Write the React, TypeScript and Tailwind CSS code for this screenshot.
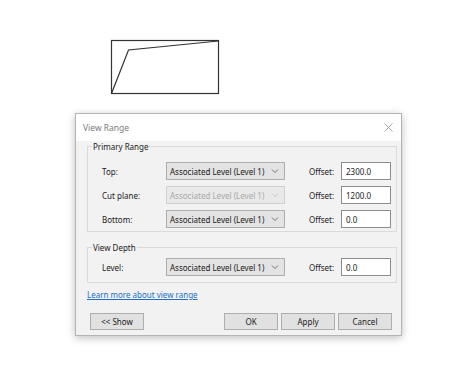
// App.tsx — "View Range" dialog
function Chevron({ disabled = false }: { disabled?: boolean }) {
  return (
    <svg className="h-[6px] w-[8px]" viewBox="0 0 8 6" fill="none" aria-hidden="true">
      <path d="M1 1.5l3 3 3-3" stroke={disabled ? '#c8c8c8' : '#777'} strokeWidth="1" />
    </svg>
  );
}

function LevelSelect({ disabled = false }: { disabled?: boolean }) {
  return (
    <div
      className={
        disabled
          ? 'flex h-[18px] w-[119px] items-center justify-between border border-[#cfcfcf] bg-[#e9e9e9] pl-[3px] pr-[5px] text-[#a8a8a8]'
          : 'flex h-[18px] w-[119px] items-center justify-between border border-[#adadad] bg-[#e3e3e3] pl-[3px] pr-[5px] text-[#1a1a1a]'
      }
    >
      <span>Associated Level (Level 1)</span>
      <Chevron disabled={disabled} />
    </div>
  );
}

function Row({ label, value, disabled = false }: { label: string; value: string; disabled?: boolean }) {
  return (
    <div className="flex h-[18px] items-center">
      <span className="w-[78px] shrink-0 pl-[14px]">{label}</span>
      <LevelSelect disabled={disabled} />
      <span className="ml-[24px] w-[32px] shrink-0">Offset:</span>
      <div className="flex h-[18px] w-[50px] shrink-0 items-center border border-[#8c8c8c] bg-white pl-[4px]">{value}</div>
    </div>
  );
}

function Btn({ children, className = '' }: { children: string; className?: string }) {
  return (
    <button
      className={
        'flex h-[17px] w-[54px] items-center justify-center border border-[#adadad] bg-[#e1e1e1] text-[#1a1a1a] ' + className
      }
    >
      {children}
    </button>
  );
}

export default function App() {
  return (
    <div className="h-[368px] w-[474px] bg-white pt-[39px] font-['Noto_Sans',sans-serif] text-[8px] leading-[11px] text-[#1a1a1a]">
      {/* sketch */}
      <svg className="ml-[110px] h-[56px] w-[110px]" viewBox="0 0 110 56" fill="none" aria-hidden="true">
        <rect x="1.5" y="1.5" width="107" height="53" stroke="#333" strokeWidth="1.2" />
        <polyline points="1.5,54.5 18.5,11 108.5,2" stroke="#333" strokeWidth="1.2" />
      </svg>

      {/* dialog */}
      <div className="ml-[75px] mt-[18px] h-[223px] w-[327px] border border-[#b4b4b4] bg-[#f2f2f2] shadow-[0_2px_8px_rgba(0,0,0,0.25)]">
        <div className="flex h-[27px] items-center justify-between bg-white pl-[7px] pr-[8px]">
          <span className="text-[8.5px] text-[#7a7a7a]">View Range</span>
          <svg className="h-[9px] w-[9px]" viewBox="0 0 9 9" aria-hidden="true">
            <path d="M0.5 0.5l8 8M8.5 0.5l-8 8" stroke="#9a9a9a" strokeWidth="0.9" />
          </svg>
        </div>

        <div className="px-[11px]">
          <fieldset className="w-[310px] border border-[#dadada] px-0 pb-[3px] pt-[10px]">
            <legend className="ml-[4px] px-[1px]">Primary Range</legend>
            <div className="flex flex-col gap-[6px]">
              <Row label="Top:" value="2300.0" />
              <Row label="Cut plane:" value="1200.0" disabled />
              <Row label="Bottom:" value="0.0" />
            </div>
          </fieldset>

          <fieldset className="mt-[10px] w-[310px] border border-[#dadada] px-0 pb-[6px] pt-[5px]">
            <legend className="ml-[4px] px-[1px]">View Depth</legend>
            <Row label="Level:" value="0.0" />
          </fieldset>

          <a className="mt-[6px] block text-[#1c6fc4] underline" href="#">
            Learn more about view range
          </a>

          <div className="mt-[13px] flex w-[310px] items-center pr-[5px]">
            <Btn className="ml-[3px]">{'<< Show'}</Btn>
            <div className="ml-auto flex gap-[3px]">
              <Btn>OK</Btn>
              <Btn>Apply</Btn>
              <Btn>Cancel</Btn>
            </div>
          </div>
        </div>
      </div>
    </div>
  );
}
